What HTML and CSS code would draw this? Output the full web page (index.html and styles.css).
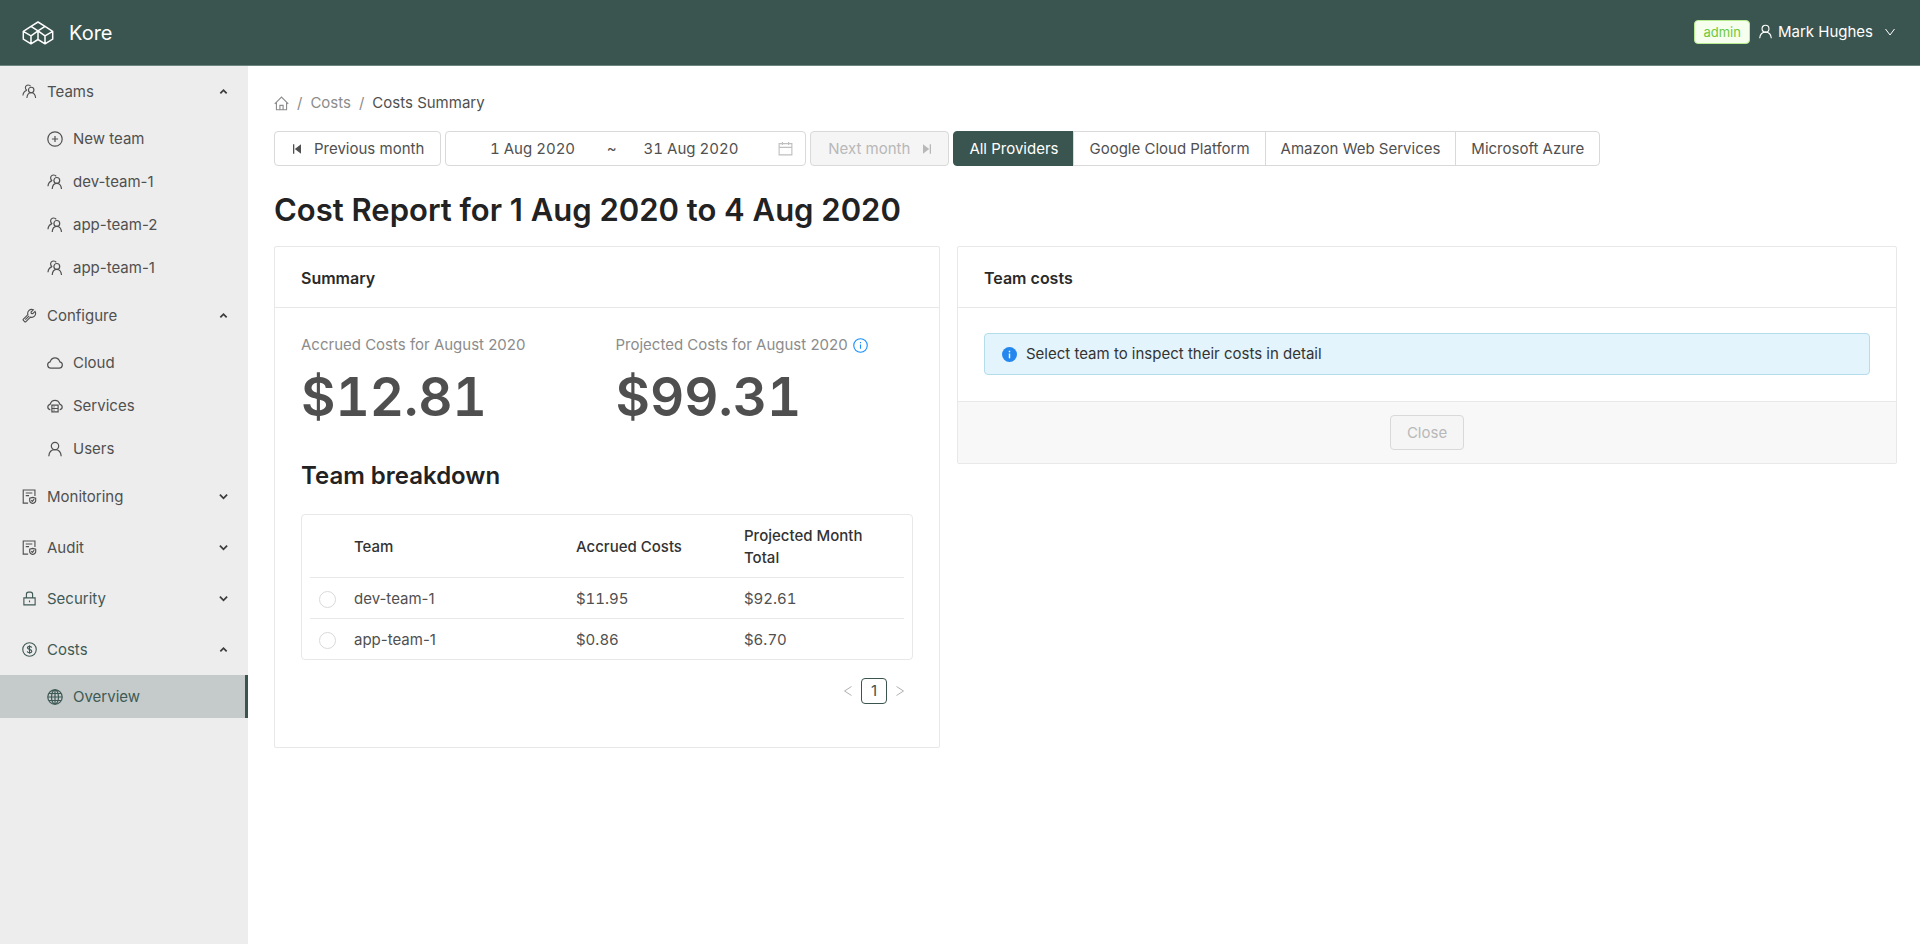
FILE: index.html
```html
<!DOCTYPE html>
<html lang="en">
<head>
<meta charset="utf-8">
<title>Kore - Costs Summary</title>
<link rel="stylesheet" href="styles.css">
</head>
<body>
<svg class="sprite" aria-hidden="true">
  <symbol id="i-team" viewBox="0 0 16 16"><circle cx="9.8" cy="6.4" r="2.9"/><path d="M5.2 15c.2-3.2 2-5.7 4.6-5.7s4.5 2.5 4.7 5.7M9.2 2.4C8.6 1.3 7.600 1 6.700 1 4.900 1 3.600 2.400 3.600 4.100c0 1.200.7 2.200 1.700 2.700M1 12.200c.2-2.600 1.500-4.500 3.700-5.300"/></symbol>
  <symbol id="i-user" viewBox="0 0 16 16"><circle cx="8" cy="5" r="3.700"/><path d="M1.800 15.200C2.100 11.500 4.400 8.700 8 8.700s5.900 2.800 6.200 6.500"/></symbol>
  <symbol id="i-plus" viewBox="0 0 16 16"><circle cx="8" cy="8" r="7.200"/><path d="M8 4.900v6.200M4.900 8h6.200"/></symbol>
  <symbol id="i-tool" viewBox="0 0 16 16"><path d="M13.900 3.700 11.500 6 9.900 5.800 9.700 4.300l2.400-2.400C10.400 1.100 8.500 1.500 7.300 2.700 6.100 3.900 5.800 5.500 6.300 7L1.500 11.800a1 1 0 0 0 0 1.400l1.300 1.300a1 1 0 0 0 1.400 0L9 9.700c1.500.5 3.100.2 4.300-1 1.300-1.300 1.500-3.300.6-5zM3.500 12.500l4.200-4.200"/></symbol>
  <symbol id="i-cloud" viewBox="0 0 16 16"><path d="M3.900 13.200a3.200 3.200 0 0 1-.8-6.300C3.900 4.500 5.700 2.900 8 2.900s4.100 1.600 4.900 4a3.200 3.200 0 0 1-.8 6.300z"/></symbol>
  <symbol id="i-cloudserver" viewBox="0 0 16 16"><path d="M3.300 11.800C1.900 11.500.8 10.500.8 9.100c0-1.400 1-2.500 2.300-2.800C3.900 3.900 5.700 2.400 8 2.400s4.100 1.500 4.900 3.900c1.300.3 2.300 1.400 2.300 2.800 0 1.400-1.100 2.400-2.500 2.700M4.900 7.200h6.200v6.700H4.900zM4.900 10.500h6.200M6.500 8.900h1M6.500 12.200h1"/></symbol>
  <symbol id="i-audit" viewBox="0 0 16 16"><path d="M6.500 15H1.300V1h12.500v6.500M4 4.300h7M4 7h3.500M11.400 8.900l3.200 1v2.500c0 1.500-1.500 2.400-3.200 3-1.700-.6-3.200-1.500-3.200-3V9.900zM9.900 12l1.200 1.200 1.900-2.300"/></symbol>
  <symbol id="i-lock" viewBox="0 0 16 16"><path d="M2 7.300h12v7.500H2zM4.700 7.300V3.500c0-1.300.9-2.300 2.200-2.300h2.200c1.300 0 2.200 1 2.200 2.300v3.800M8 10v2"/></symbol>
  <symbol id="i-dollar" viewBox="0 0 16 16"><circle cx="8" cy="8" r="7.200"/><path d="M10.300 6.100C10.100 5.100 9.200 4.600 8 4.600c-1.300 0-2.200.6-2.200 1.600C5.800 8.500 10.400 7.300 10.400 9.800c0 1.100-1 1.700-2.400 1.700-1.300 0-2.300-.6-2.400-1.700M8 3.500v9"/></symbol>
  <symbol id="i-globe" viewBox="0 0 16 16"><circle cx="8" cy="8" r="7.200"/><ellipse cx="8" cy="8" rx="3.500" ry="7.200"/><path d="M8 .8v14.400M.8 8h14.400M2 4.500h12M2 11.500h12"/></symbol>
  <symbol id="i-home" viewBox="0 0 16 16"><path d="M.8 8.300 8 1.200l7.200 7.100M2.600 7v7.700h10.800V7M6.300 14.700V10h3.400v4.700"/></symbol>
  <symbol id="i-calendar" viewBox="0 0 16 16"><path d="M1.200 2.800h13.600v12H1.200zM1.200 6.800h13.600M4.700 1v3.300M11.300 1v3.300"/></symbol>
  <symbol id="i-info" viewBox="0 0 16 16"><circle cx="8" cy="8" r="7.200"/><path d="M8 7v4.500M8 4.300v1.300"/></symbol>
  <symbol id="i-up" viewBox="0 0 10 10"><path d="M1.500 7 5 3.500 8.500 7"/></symbol>
  <symbol id="i-down" viewBox="0 0 10 10"><path d="M1 3 5 7 9 3"/></symbol>
  <symbol id="i-chevron" viewBox="0 0 10 10"><path d="M.5 2 5 8 9.500 2"/></symbol>
  <symbol id="i-left" viewBox="0 0 10 10"><path d="M8.500.5 1.500 5l7 4.500"/></symbol>
  <symbol id="i-right" viewBox="0 0 10 10"><path d="m1.500.5 7 4.500-7 4.500"/></symbol>
  <symbol id="i-back" viewBox="0 0 10 10"><path class="solid" d="M1 .3h1.300v9.400H1zM9 .3v9.400L2.800 5z"/></symbol>
  <symbol id="i-forward" viewBox="0 0 10 10"><path class="solid" d="M9 .3H7.700v9.400H9zM1 .3v9.400L7.200 5z"/></symbol>
</svg>

<header class="topbar">
  <a class="brand" href="#">
    <svg class="logo" viewBox="0 0 32 24" aria-hidden="true"><path d="M16 1 9 5.300l7 4.500 7-4.500zM9 5.300 1.300 10.300V18.200L9 22.800l7-4.300 7 4.300 7.700-4.600v-7.900L23 5.300M1.300 10.300 9 14.800l7-5 7 5 7.700-4.500M9 14.800v8M23 14.800v8M16 9.800v8.700"/></svg>
    <span class="brand-name">Kore</span>
  </a>
  <div class="account">
    <span class="role">admin</span>
    <button class="user" type="button">
      <svg class="icon"><use href="#i-user"/></svg>
      <span>Mark Hughes</span>
      <svg class="caret"><use href="#i-chevron"/></svg>
    </button>
  </div>
</header>

<div class="shell">
  <nav class="sidebar" aria-label="Main">
    <button class="group" type="button"><svg class="icon"><use href="#i-team"/></svg><span>Teams</span><svg class="arrow"><use href="#i-up"/></svg></button>
    <ul class="items">
      <li><a class="item" href="#"><svg class="icon"><use href="#i-plus"/></svg>New team</a></li>
      <li><a class="item" href="#"><svg class="icon"><use href="#i-team"/></svg>dev-team-1</a></li>
      <li><a class="item" href="#"><svg class="icon"><use href="#i-team"/></svg>app-team-2</a></li>
      <li><a class="item" href="#"><svg class="icon"><use href="#i-team"/></svg>app-team-1</a></li>
    </ul>
    <button class="group" type="button"><svg class="icon"><use href="#i-tool"/></svg><span>Configure</span><svg class="arrow"><use href="#i-up"/></svg></button>
    <ul class="items">
      <li><a class="item" href="#"><svg class="icon"><use href="#i-cloud"/></svg>Cloud</a></li>
      <li><a class="item" href="#"><svg class="icon"><use href="#i-cloudserver"/></svg>Services</a></li>
      <li><a class="item" href="#"><svg class="icon"><use href="#i-user"/></svg>Users</a></li>
    </ul>
    <button class="group" type="button"><svg class="icon"><use href="#i-audit"/></svg><span>Monitoring</span><svg class="arrow"><use href="#i-down"/></svg></button>
    <button class="group" type="button"><svg class="icon"><use href="#i-audit"/></svg><span>Audit</span><svg class="arrow"><use href="#i-down"/></svg></button>
    <button class="group tinted" type="button"><svg class="icon"><use href="#i-lock"/></svg><span>Security</span><svg class="arrow"><use href="#i-down"/></svg></button>
    <button class="group tinted" type="button"><svg class="icon"><use href="#i-dollar"/></svg><span>Costs</span><svg class="arrow"><use href="#i-up"/></svg></button>
    <ul class="items">
      <li><a class="item selected" href="#" aria-current="page"><svg class="icon"><use href="#i-globe"/></svg>Overview</a></li>
    </ul>
  </nav>

  <main class="content">
    <nav class="crumbs" aria-label="Breadcrumb">
      <a href="#" aria-label="Home"><svg class="icon"><use href="#i-home"/></svg></a>
      <span>/</span><a href="#">Costs</a><span>/</span><span class="current">Costs Summary</span>
    </nav>

    <div class="toolbar">
      <button class="btn" type="button"><svg class="step"><use href="#i-back"/></svg>Previous month</button>
      <div class="range">
        <input type="text" aria-label="Start date" value="1 Aug 2020">
        <span>~</span>
        <input type="text" aria-label="End date" value="31 Aug 2020">
        <svg class="icon"><use href="#i-calendar"/></svg>
      </div>
      <button class="btn" type="button" disabled>Next month<svg class="step"><use href="#i-forward"/></svg></button>
      <div class="providers">
        <button class="provider active" type="button">All Providers</button>
        <button class="provider" type="button">Google Cloud Platform</button>
        <button class="provider" type="button">Amazon Web Services</button>
        <button class="provider" type="button">Microsoft Azure</button>
      </div>
    </div>

    <h1 class="title">Cost Report for 1 Aug 2020 to 4 Aug 2020</h1>

    <div class="cards">
      <section class="card">
        <h2 class="card-head">Summary</h2>
        <div class="card-body">
          <div class="stats">
            <div>
              <div class="stat-label">Accrued Costs for August 2020</div>
              <div class="stat-value">$12.81</div>
            </div>
            <div>
              <div class="stat-label">Projected Costs for August 2020<svg class="icon info"><use href="#i-info"/></svg></div>
              <div class="stat-value">$99.31</div>
            </div>
          </div>
          <h3 class="subtitle">Team breakdown</h3>
          <div class="table-box">
            <table class="table">
              <colgroup><col class="c-pick"><col class="c-team"><col class="c-accrued"><col></colgroup>
              <thead>
                <tr><td></td><th>Team</th><th>Accrued Costs</th><th>Projected Month Total</th></tr>
              </thead>
              <tbody>
                <tr><td><input class="radio" type="radio" name="team" id="t1"></td><td><label for="t1">dev-team-1</label></td><td class="money">$11.95</td><td class="money">$92.61</td></tr>
                <tr><td><input class="radio" type="radio" name="team" id="t2"></td><td><label for="t2">app-team-1</label></td><td class="money">$0.86</td><td class="money">$6.70</td></tr>
              </tbody>
            </table>
          </div>
          <nav class="pager" aria-label="Pages">
            <button type="button" aria-label="Previous page" disabled><svg><use href="#i-left"/></svg></button>
            <button class="page" type="button" aria-current="page">1</button>
            <button type="button" aria-label="Next page" disabled><svg><use href="#i-right"/></svg></button>
          </nav>
        </div>
      </section>

      <section class="card">
        <h2 class="card-head">Team costs</h2>
        <div class="card-body">
          <div class="alert" role="status">
            <svg class="alert-icon" viewBox="0 0 16 16" aria-hidden="true"><circle cx="8" cy="8" r="8"/><path d="M8 7v5M8 4v1.500"/></svg>
            Select team to inspect their costs in detail
          </div>
        </div>
        <footer class="card-foot"><button class="btn" type="button" disabled>Close</button></footer>
      </section>
    </div>
  </main>
</div>
</body>
</html>
```
FILE: styles.css
```css
* { box-sizing: border-box; }

body {
  margin: 0;
  min-height: 100vh;
  display: flex;
  flex-direction: column;
  background: #fff;
  color: #505050;
  font: 15px/22px Inter, "Liberation Sans", sans-serif;
}

button, input { font: inherit; color: inherit; }
button { cursor: pointer; }
button:disabled { cursor: not-allowed; }
a { color: inherit; text-decoration: none; }
svg { fill: none; stroke: currentColor; flex: none; }
.sprite { position: absolute; width: 0; height: 0; }
.solid { fill: currentColor; stroke: none; }
.icon { width: 15px; height: 15px; stroke-width: 1.2; }

/* Top bar */
.topbar {
  display: flex;
  align-items: center;
  justify-content: space-between;
  height: 66px;
  padding: 0 25px 0 22px;
  background: #3a544f;
  border-bottom: 1px solid #6d857f;
  color: #fff;
}
.brand { display: flex; align-items: center; gap: 15px; }
.logo { width: 32px; height: 24px; stroke-width: 1.5; stroke-linejoin: round; }
.brand-name { font-size: 20px; }
.account { display: flex; align-items: center; gap: 8px; padding-bottom: 2px; }
.role {
  padding: 0 8px;
  border: 1px solid #b7eb8f;
  border-radius: 4px;
  background: #f6ffed;
  color: #6cc83e;
  font-size: 13px;
}
.user {
  display: flex;
  align-items: center;
  gap: 5px;
  padding: 0;
  border: 0;
  background: none;
}
.caret { width: 10px; height: 10px; margin-left: 7px; stroke-width: 1; }

/* Side menu */
.shell { flex: 1; display: flex; }
.sidebar {
  flex: none;
  width: 248px;
  padding-top: 4px;
  background: #ededed;
}
.group {
  display: flex;
  align-items: center;
  gap: 10px;
  width: 100%;
  height: 43px;
  margin-bottom: 8px;
  padding: 0 20px 0 22px;
  border: 0;
  background: none;
  text-align: left;
}
.group span { flex: 1; }
.group:has(+ .items) { margin-bottom: 4px; }
.tinted, .selected { color: #3f5a55; }
.arrow { width: 9px; height: 9px; stroke-width: 2; color: #3c3c3c; }
.items { margin: 0 0 5px; padding: 0; list-style: none; }
.item {
  display: flex;
  align-items: center;
  gap: 10px;
  height: 43px;
  padding-left: 47px;
}
.item .icon { width: 16px; height: 16px; }
.selected { background: #c4cbca; border-right: 3px solid #3a544f; }

/* Page content */
.content { flex: 1; min-width: 0; padding: 25px 23px 26px 26px; }
.crumbs { display: flex; align-items: center; gap: 8px; height: 24px; color: #8c8c8c; }
.crumbs a { display: flex; }
.crumbs .current { color: #505050; }

.toolbar { display: flex; align-items: center; gap: 4px; margin-top: 16px; }
.btn {
  display: flex;
  align-items: center;
  gap: 12px;
  height: 35px;
  padding: 0 16px;
  border: 1px solid #d9d9d9;
  border-radius: 4px;
  background: #fff;
  white-space: nowrap;
}
.btn:disabled { background: #f5f5f5; color: #b8b8b8; }
.step { width: 10px; height: 10px; }
.toolbar .btn { padding: 0 16px 0 17px; }
.range {
  display: flex;
  align-items: center;
  width: 361px;
  height: 35px;
  padding: 0 12px;
  border: 1px solid #d9d9d9;
  border-radius: 4px;
}
.range input {
  flex: 1;
  min-width: 0;
  padding: 0;
  border: 0;
  background: none;
  text-align: center;
  font-variant-numeric: tabular-nums;
  outline: 0;
}
.range .icon { margin-left: 13px; color: #bfbfbf; }
.providers { display: flex; }
.provider {
  height: 35px;
  margin-left: -1px;
  padding: 0 15px;
  border: 1px solid #d9d9d9;
  background: #fff;
}
.provider:first-child { margin-left: 0; border-radius: 4px 0 0 4px; }
.provider:last-child { border-radius: 0 4px 4px 0; }
.provider.active { border-color: #3a544f; background: #3a544f; color: #fff; }

.title { margin: 24px 0 16px; color: #222; font-size: 31px; line-height: 40px; font-weight: 600; }

.cards { display: grid; grid-template-columns: 666fr 940fr; gap: 17px; align-items: start; }
.card { border: 1px solid #e8e8e8; border-radius: 2px; }
.card-head {
  margin: 0;
  padding: 20px 26px 18px;
  border-bottom: 1px solid #e8e8e8;
  color: #2a2a2a;
  font-size: 16px;
  font-weight: 600;
}
.card-body { padding: 25px 26px 26px; }
.card-foot {
  display: flex;
  justify-content: center;
  padding: 13px;
  border-top: 1px solid #e8e8e8;
  background: #f8f8f8;
}

.stats { display: grid; grid-template-columns: 1fr 1fr; gap: 17px; }
.stat-label { display: flex; align-items: center; gap: 5px; height: 24px; color: #8c8c8c; }
.info { color: #1890ff; }
.stat-value {
  margin-top: 7px;
  color: #4f4f4f;
  font-size: 53px;
  line-height: 66px;
  font-weight: 600;
  font-variant-numeric: tabular-nums;
}
.subtitle { margin: 30px 0 22px; color: #222; font-size: 24px; line-height: 32px; font-weight: 600; }

.table-box { padding: 0 8px; border: 1px solid #e8e8e8; border-radius: 4px; }
.table { width: 100%; border-collapse: collapse; table-layout: fixed; }
.c-pick { width: 36px; }
.c-team { width: 222px; }
.c-accrued { width: 168px; }
.table th, .table td { padding: 10px 8px 8px; text-align: left; }
.table td:first-child { padding-left: 9px; }
.table thead tr { height: 62px; }
.table th { color: #333; font-weight: 500; }
.table tbody tr { border-top: 1px solid #e8e8e8; }
.money { font-variant-numeric: tabular-nums; }
.radio {
  display: block;
  appearance: none;
  width: 17px;
  height: 17px;
  margin: 0;
  border: 1px solid #d9d9d9;
  border-radius: 50%;
  background: #fff;
}
.radio:checked { border: 5px solid #3a544f; }

.pager { display: flex; justify-content: flex-end; align-items: center; margin: 18px 0 17px; }
.pager button {
  display: grid;
  place-items: center;
  width: 26px;
  height: 26px;
  padding: 0;
  border: 0;
  background: none;
  color: #b0b0b0;
}
.pager svg { width: 10px; height: 10px; }
.pager .page { border: 1px solid #3a544f; border-radius: 4px; color: #3a544f; }

.alert {
  display: flex;
  align-items: center;
  gap: 9px;
  padding: 9px 17px;
  border: 1px solid #b4dcea;
  border-radius: 4px;
  background: #e3f4fc;
  color: #333;
}
.alert-icon { width: 15px; height: 15px; }
.alert-icon circle { fill: #2487ee; stroke: none; }
.alert-icon path { stroke: #fff; stroke-width: 1.5; }
```
